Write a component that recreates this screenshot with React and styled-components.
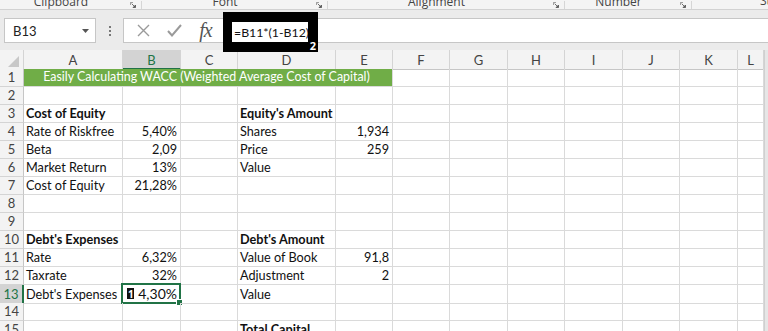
import React from "react";
import styled, { createGlobalStyle, css } from "styled-components";

const GlobalStyle = createGlobalStyle`
  html, body {
    margin: 0;
    padding: 0;
    background: #ffffff;
    overflow: hidden;
  }
  body {
    font-family: Lato, "Open Sans", sans-serif;
  }
`;

const COLS = "24px 99px 58px 57px 98px 57px 57px 58px 57px 58px 57px 58px 26px 4px";
const LETTERS = ["A", "B", "C", "D", "E", "F", "G", "H", "I", "J", "K", "L"];

// rows of the sheet: A, B, D and E columns (C stays empty)
const ROWS = [
  { title: "Easily Calculating WACC (Weighted Average Cost of Capital)" },
  {},
  { a: "Cost of Equity", d: "Equity's Amount", bold: true },
  { a: "Rate of Riskfree", b: "5,40%", d: "Shares", e: "1,934" },
  { a: "Beta", b: "2,09", d: "Price", e: "259" },
  { a: "Market Return", b: "13%", d: "Value" },
  { a: "Cost of Equity", b: "21,28%" },
  {},
  {},
  { a: "Debt's Expenses", d: "Debt's Amount", bold: true },
  { a: "Rate", b: "6,32%", d: "Value of Book", e: "91,8" },
  { a: "Taxrate", b: "32%", d: "Adjustment", e: "2" },
  { a: "Debt's Expenses", b: "4,30%", d: "Value", selected: true },
  {},
  { d: "Total Capital", bold: true },
];

const GROUPS = [
  { label: "Clipboard", width: 142 },
  { label: "Font", width: 186 },
  { label: "Alignment", width: 237 },
  { label: "Number", width: 127 },
];

const Page = styled.div`
  position: relative;
  width: 768px;
  height: 331px;
  overflow: hidden;
  background: #ebebeb;
`;

const Ribbon = styled.div`
  display: flex;
  height: 9px;
  overflow: hidden;
  background: #f4f4f4;
  border-bottom: 1px solid #d2d2d2;
`;

const Group = styled.div`
  position: relative;
  flex: 0 0 ${(p) => p.$width}px;
  display: flex;
  border-right: 1px solid #d6d6d6;
  box-sizing: border-box;
  height: 8px;
  margin-top: 1px;
`;

const GroupLabel = styled.div`
  flex: 1;
  text-align: center;
  font-family: "Open Sans", sans-serif;
  font-size: 12px;
  line-height: 12px;
  margin-top: -5px;
  color: #444;
  padding-right: 8px;
`;

const Launcher = styled.svg`
  flex: 0 0 auto;
  width: 6px;
  height: 6px;
  margin: 1px 5px 0 0;
`;

const StylesLabel = styled(GroupLabel)`
  flex: 1;
  text-align: left;
  padding-left: 68px;
`;

const FormulaRow = styled.div`
  display: flex;
  align-items: stretch;
  height: 25px;
  margin-top: 8px;
  padding-left: 4px;
`;

const NameBox = styled.div`
  box-sizing: border-box;
  width: 92px;
  display: flex;
  align-items: center;
  justify-content: space-between;
  padding: 0 6px 0 8px;
  background: #fff;
  border: 1px solid #c6c6c6;
  font-size: 13px;
  color: #222;
`;

const Dots = styled.div`
  width: 27px;
  display: flex;
  flex-direction: column;
  align-items: center;
  justify-content: center;
  gap: 2px;
  span {
    width: 2px;
    height: 2px;
    background: #777;
  }
`;

const FormulaBox = styled.div`
  flex: 1;
  display: flex;
  align-items: center;
  background: #fff;
  border: 1px solid #c6c6c6;
  border-right: none;
  padding-left: 4px;
`;

const FxButton = styled.div`
  width: 31px;
  height: 100%;
  display: flex;
  align-items: center;
  justify-content: center;
`;

const FxText = styled.span`
  font-family: "Liberation Serif", serif;
  font-style: italic;
  font-size: 20px;
  color: #555;
  letter-spacing: -1px;
`;

const Callout = styled.div`
  position: absolute;
  left: 223px;
  top: 12px;
  width: 95px;
  height: 40px;
  box-sizing: border-box;
  padding: 10px 10px 10px 9px;
  background: #000;
`;

const CalloutField = styled.div`
  height: 100%;
  background: #fff;
  display: flex;
  align-items: center;
  padding-left: 2px;
  font-size: 12.3px;
  color: #111;
  white-space: nowrap;
  overflow: hidden;
`;

const CalloutNum = styled.span`
  position: absolute;
  right: 2px;
  bottom: 1px;
  font-family: "Open Sans", sans-serif;
  font-weight: 700;
  font-size: 11px;
  line-height: 11px;
  color: #fff;
`;

const Sheet = styled.div`
  margin-top: 7px;
  background: #fff;
`;

const Row = styled.div`
  display: grid;
  grid-template-columns: ${COLS};
  height: ${(p) => (p.$header ? 19 : 18)}px;
`;

const HeadCell = styled.div`
  box-sizing: border-box;
  display: flex;
  align-items: center;
  justify-content: center;
  background: #f3f3f3;
  border-right: 1px solid #d4d4d4;
  border-bottom: 1px solid #c6c6c6;
  font-size: 13px;
  color: #444;
  padding-top: 1px;
  ${(p) =>
    p.$active &&
    css`
      background: #d3d3d3;
      color: #217346;
      border-bottom: 2px solid #217346;
    `}
`;

const RowHead = styled.div`
  box-sizing: border-box;
  display: flex;
  align-items: flex-end;
  justify-content: center;
  padding-bottom: 1px;
  background: #f3f3f3;
  border-right: 1px solid #c6c6c6;
  border-bottom: 1px solid #d4d4d4;
  font-size: 13px;
  color: #444;
  ${(p) =>
    p.$active &&
    css`
      background: #d3d3d3;
      color: #217346;
      border-right: 2px solid #217346;
    `}
`;

const Cell = styled.div`
  position: relative;
  box-sizing: border-box;
  display: flex;
  align-items: flex-end;
  justify-content: ${(p) => (p.$right ? "flex-end" : "flex-start")};
  padding: 0 3px 1px 2px;
  border-right: 1px solid #dadada;
  border-bottom: 1px solid #dadada;
  font-size: 12.7px;
  line-height: 16px;
  color: #111;
  white-space: nowrap;
  font-weight: ${(p) => (p.$bold ? 700 : 400)};
`;

const TitleCell = styled(Cell)`
  grid-column: span 5;
  justify-content: center;
  background: #70ad47;
  color: #fff;
  font-size: 12.4px;
  padding-left: 0;
`;

const Gutter = styled.div`
  background: #e6e6e6;
  border-left: 1px solid #d0d0d0;
`;

const Selection = styled.div`
  position: absolute;
  left: -2px;
  top: -2px;
  right: -1px;
  bottom: -1px;
  border: 2px solid #217346;
  pointer-events: none;
  &::after {
    content: "";
    position: absolute;
    right: -4px;
    bottom: -4px;
    width: 5px;
    height: 5px;
    background: #217346;
    border: 1px solid #fff;
  }
`;

const SelectedValue = styled.span`
  display: flex;
  align-items: flex-end;
  gap: 4px;
  font-size: 14px;
  line-height: 17px;
`;

const Badge = styled.span`
  display: inline-flex;
  align-items: center;
  justify-content: center;
  width: 7px;
  height: 11px;
  margin-bottom: 3px;
  background: #111;
  color: #fff;
  font-family: "Open Sans", sans-serif;
  font-weight: 700;
  font-size: 10px;
  line-height: 10px;
`;

const LauncherIcon = () => (
  <Launcher viewBox="0 0 7 7">
    <path d="M0.5 3.5V0.5H3.5" fill="none" stroke="#888" strokeWidth="1" />
    <path d="M2 2L5.5 5.5M6.5 3.5V6.5H3.5Z" fill="#555" stroke="#555" strokeWidth="1" />
  </Launcher>
);

const Corner = () => (
  <HeadCell>
    <svg width="23" height="18" viewBox="0 0 23 18">
      <path d="M19 5V16H8Z" fill="#c8c8c8" />
    </svg>
  </HeadCell>
);

export default function App() {
  return (
    <Page>
      <GlobalStyle />
      <Ribbon>
        {GROUPS.map((g) => (
          <Group key={g.label} $width={g.width}>
            <GroupLabel>{g.label}</GroupLabel>
            <LauncherIcon />
          </Group>
        ))}
        <StylesLabel>Styles</StylesLabel>
      </Ribbon>

      <FormulaRow>
        <NameBox>
          <span>B13</span>
          <svg width="7" height="4" viewBox="0 0 7 4">
            <path d="M0 0H7L3.5 4Z" fill="#555" />
          </svg>
        </NameBox>
        <Dots>
          <span />
          <span />
          <span />
        </Dots>
        <FormulaBox>
          <FxButton>
            <svg width="13" height="13" viewBox="0 0 13 13">
              <path d="M1 1L12 12M12 1L1 12" stroke="#9a9a9a" strokeWidth="1.4" />
            </svg>
          </FxButton>
          <FxButton>
            <svg width="15" height="13" viewBox="0 0 15 13">
              <path d="M1 7L5 11.5L14 1" fill="none" stroke="#9a9a9a" strokeWidth="2" />
            </svg>
          </FxButton>
          <FxButton>
            <FxText>fx</FxText>
          </FxButton>
        </FormulaBox>
      </FormulaRow>

      <Callout>
        <CalloutField>=B11*(1-B12)</CalloutField>
        <CalloutNum>2</CalloutNum>
      </Callout>

      <Sheet>
        <Row $header>
          <Corner />
          {LETTERS.map((l) => (
            <HeadCell key={l} $active={l === "B"}>
              {l}
            </HeadCell>
          ))}
          <Gutter />
        </Row>
        {ROWS.map((r, i) => (
          <Row key={i}>
            <RowHead $active={r.selected}>{i + 1}</RowHead>
            {r.title ? (
              <TitleCell>{r.title}</TitleCell>
            ) : (
              <>
                <Cell $bold={r.bold}>{r.a}</Cell>
                <Cell $right>
                  {r.selected ? (
                    <>
                      <SelectedValue>
                        <Badge>1</Badge>
                        {r.b}
                      </SelectedValue>
                      <Selection />
                    </>
                  ) : (
                    r.b
                  )}
                </Cell>
                <Cell />
                <Cell $bold={r.bold}>{r.d}</Cell>
                <Cell $right>{r.e}</Cell>
              </>
            )}
            {LETTERS.slice(5).map((l) => (
              <Cell key={l} />
            ))}
            <Gutter />
          </Row>
        ))}
      </Sheet>
    </Page>
  );
}
